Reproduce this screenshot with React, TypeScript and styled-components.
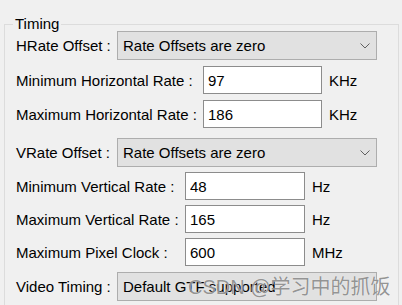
import styled, { createGlobalStyle } from 'styled-components';

const GlobalStyle = createGlobalStyle`
  body {
    margin: 0;
    background: #f0f0f0;
    font-family: "Liberation Sans", Arial, sans-serif;
    font-size: 15px;
    color: #000;
  }
`;

const Page = styled.div`
  position: relative;
  width: 402px;
  height: 305px;
  overflow: hidden;
  box-sizing: border-box;
  padding: 17px 3px 0 4px;
`;

const Group = styled.fieldset`
  margin: 0;
  border: 1px solid #dcdcdc;
  padding: 0 11px 30px 11px;
`;

const Legend = styled.legend`
  font-size: 15px;
  line-height: 14px;
  padding: 0 2px;
  margin-left: -3px;
`;

const Fields = styled.div`
  display: flex;
  flex-direction: column;
`;

const Row = styled.div<{ $top: number }>`
  display: flex;
  align-items: center;
  margin-top: ${(p) => p.$top}px;
`;

const Label = styled.span<{ $w: number }>`
  flex: none;
  width: ${(p) => p.$w}px;
  white-space: nowrap;
`;

const Combo = styled.div`
  box-sizing: border-box;
  width: 260px;
  height: 29px;
  display: flex;
  align-items: center;
  justify-content: space-between;
  padding: 0 6px 0 5px;
  background: #e1e1e1;
  border: 1px solid #adadad;
  color: #000;
  white-space: nowrap;
`;

const Field = styled.input<{ $w: number }>`
  box-sizing: border-box;
  width: ${(p) => p.$w}px;
  height: 28px;
  margin: 0;
  padding: 0 4px;
  border: 1px solid #8c8c8c;
  background: #fff;
  font: inherit;
  color: #000;
  outline: none;
`;

const Unit = styled.span`
  margin-left: 7px;
`;

const Watermark = styled.div`
  position: absolute;
  left: 188px;
  top: 274px;
  font-family: "Liberation Sans", "Noto Sans CJK SC", sans-serif;
  font-size: 20px;
  line-height: 26px;
  color: rgba(120, 120, 120, 0.8);
  text-shadow: 0 0 1px rgba(255, 255, 255, 0.9);
  white-space: nowrap;
  pointer-events: none;
`;

function Chevron() {
  return (
    <svg width="10" height="6" viewBox="0 0 10 6">
      <path d="M0.5 0.5 L5 5 L9.5 0.5" fill="none" stroke="#606060" strokeWidth="1" />
    </svg>
  );
}

function Select({ value, arrow = true }: { value: string; arrow?: boolean }) {
  return (
    <Combo>
      <span>{value}</span>
      {arrow && <Chevron />}
    </Combo>
  );
}

const rates = [
  { label: 'Minimum Horizontal Rate :', value: '97', unit: 'KHz', top: 6 },
  { label: 'Maximum Horizontal Rate :', value: '186', unit: 'KHz', top: 6 },
];

const vrates = [
  { label: 'Minimum Vertical Rate :', value: '48', unit: 'Hz', top: 5 },
  { label: 'Maximum Vertical Rate :', value: '165', unit: 'Hz', top: 5 },
  { label: 'Maximum Pixel Clock :', value: '600', unit: 'MHz', top: 5 },
];

export default function App() {
  return (
    <Page>
      <GlobalStyle />
      <Group>
        <Legend>Timing</Legend>
        <Fields>
          <Row $top={0}>
            <Label $w={101}>HRate Offset :</Label>
            <Select value="Rate Offsets are zero" />
          </Row>
          {rates.map((r) => (
            <Row $top={r.top} key={r.label}>
              <Label $w={187}>{r.label}</Label>
              <Field $w={119} readOnly value={r.value} />
              <Unit>{r.unit}</Unit>
            </Row>
          ))}
          <Row $top={10}>
            <Label $w={101}>VRate Offset :</Label>
            <Select value="Rate Offsets are zero" />
          </Row>
          {vrates.map((r) => (
            <Row $top={r.top} key={r.label}>
              <Label $w={169}>{r.label}</Label>
              <Field $w={120} readOnly value={r.value} />
              <Unit>{r.unit}</Unit>
            </Row>
          ))}
          <Row $top={6}>
            <Label $w={101}>Video Timing :</Label>
            <Select value="Default GTF supported" arrow={false} />
          </Row>
        </Fields>
      </Group>
      <Watermark>CSDN @学习中的抓饭</Watermark>
    </Page>
  );
}
